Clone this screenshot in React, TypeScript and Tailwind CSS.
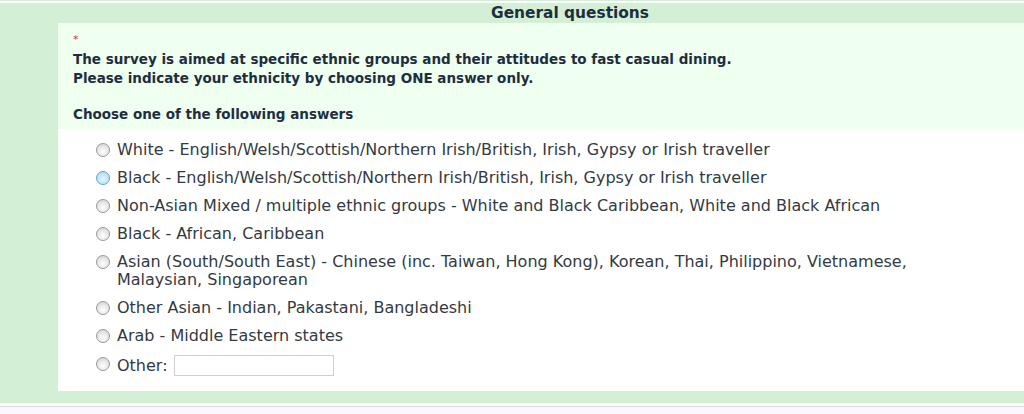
import React from 'react';

const OPTIONS = [
  { label: 'White - English/Welsh/Scottish/Northern Irish/British, Irish, Gypsy or Irish traveller' },
  { label: 'Black - English/Welsh/Scottish/Northern Irish/British, Irish, Gypsy or Irish traveller', hover: true },
  { label: 'Non-Asian Mixed / multiple ethnic groups - White and Black Caribbean, White and Black African' },
  { label: 'Black - African, Caribbean' },
  { label: 'Asian (South/South East) - Chinese (inc. Taiwan, Hong Kong), Korean, Thai, Philippino, Vietnamese, Malaysian, Singaporean' },
  { label: 'Other Asian - Indian, Pakastani, Bangladeshi' },
  { label: 'Arab - Middle Eastern states' },
  { label: 'Other:', other: true },
];

const Radio = ({ hover }: { hover?: boolean }) => (
  <span
    className={
      hover
        ? 'mt-[2px] h-[14px] w-[14px] shrink-0 rounded-full border border-[#5ea3d6] bg-[radial-gradient(circle_at_50%_60%,#e6f4fd_0%,#bfe1f8_60%,#a6d3f2_100%)]'
        : 'mt-[2px] h-[14px] w-[14px] shrink-0 rounded-full border border-[#9a9a9a] bg-[radial-gradient(circle_at_50%_65%,#ffffff_0%,#e6e6e6_55%,#c9c9c9_100%)]'
    }
  />
);

export default function App() {
  return (
    <div className="w-[1024px] h-[414px] bg-white overflow-hidden font-['DejaVu_Sans',sans-serif]">
      <div className="h-px bg-[#d3f0d6]" />
      <div className="h-[2px] bg-white" />
      <div className="bg-[#d3f0d6]">
        <div className="h-[20px] pt-[2px] flex items-center justify-center pl-[116px] text-[15.4px] font-bold text-[#1e2e3e]">
          General questions
        </div>
        <div className="ml-[58px]">
          <div className="bg-[#effff0] pl-[15px] pt-[10px] pb-[5px] text-[#1e2e3e]">
            <div className="text-[#e03030] text-[11px] leading-[14px]">*</div>
            <div className="mt-[3px] text-[13.5px] font-bold leading-[19px]">
              The survey is aimed at specific ethnic groups and their attitudes to fast casual dining.
              <br />
              Please indicate your ethnicity by choosing ONE answer only.
            </div>
            <div className="mt-[17px] text-[13.5px] font-bold leading-[19px]">
              Choose one of the following answers
            </div>
          </div>
          <div className="bg-white pl-[38px] pt-[7px] pb-[10px] text-[16px] leading-[18px] text-[#333a42]">
            {OPTIONS.map((o, i) => (
              <div key={i} className="flex gap-[7px] items-start py-[5px]">
                <Radio hover={o.hover} />
                <div className="flex items-center gap-[6px] max-w-[820px]">
                  <span>{o.label}</span>
                  {o.other && (
                    <span className="h-[21px] w-[160px] border border-[#cfcfcf] bg-white" />
                  )}
                </div>
              </div>
            ))}
          </div>
        </div>
        <div className="h-[12px]" />
      </div>
      <div className="h-[3px] bg-white" />
      <div className="h-px bg-[#d6dadf]" />
      <div className="h-[8px] bg-[#f7f9fb]" />
    </div>
  );
}
